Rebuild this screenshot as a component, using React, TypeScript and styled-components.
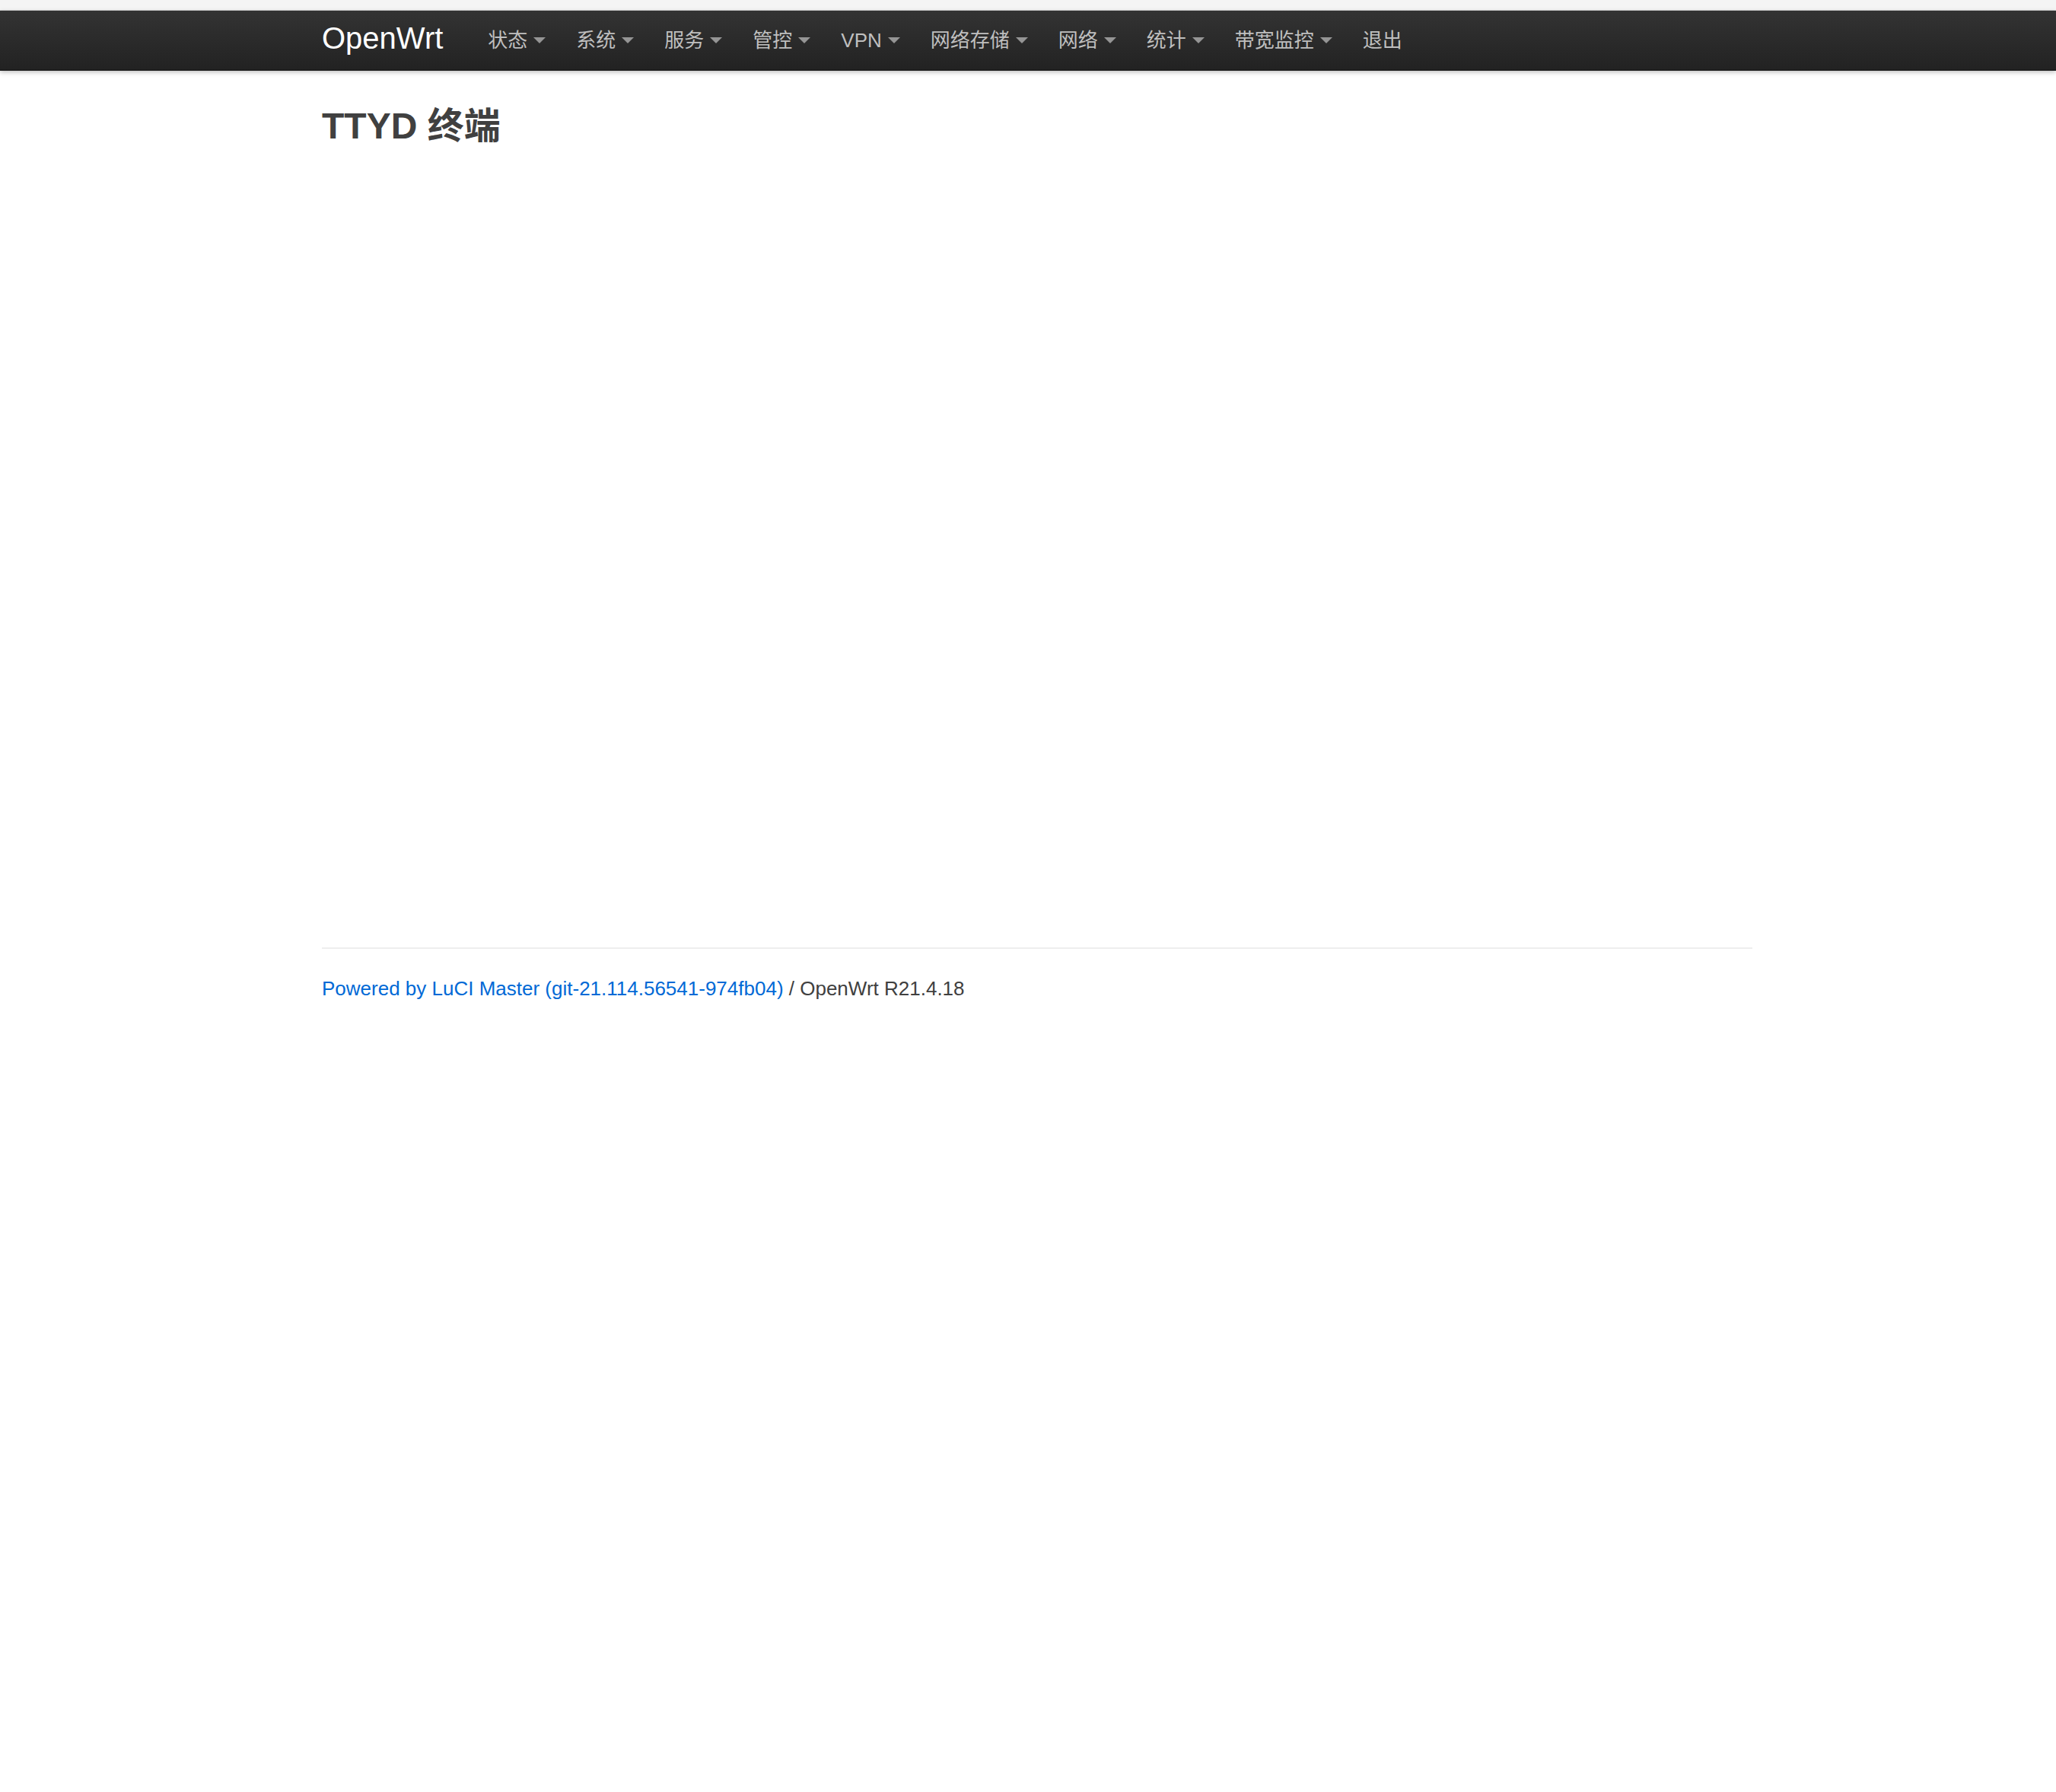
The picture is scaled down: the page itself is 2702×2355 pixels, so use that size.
import React from 'react'
import styled, { createGlobalStyle } from 'styled-components'

const GlobalStyle = createGlobalStyle`
  html, body {
    margin: 0;
    padding: 0;
    background: #fff;
  }
  body {
    font-family: 'Liberation Sans', 'Noto Sans CJK SC', sans-serif;
    font-size: 26px;
    line-height: 36px;
    color: #404040;
  }
  * {
    box-sizing: border-box;
  }
`

type MenuEntry = {
  label: string
  dropdown: boolean
}

const menu: MenuEntry[] = [
  { label: '状态', dropdown: true },
  { label: '系统', dropdown: true },
  { label: '服务', dropdown: true },
  { label: '管控', dropdown: true },
  { label: 'VPN', dropdown: true },
  { label: '网络存储', dropdown: true },
  { label: '网络', dropdown: true },
  { label: '统计', dropdown: true },
  { label: '带宽监控', dropdown: true },
  { label: '退出', dropdown: false },
]

const App = () => {
  return (
    <>
      <GlobalStyle />
      <TopStrip />
      <Header>
        <Container>
          <Brand href="#">OpenWrt</Brand>
          <Menu>
            {menu.map((item) => (
              <MenuItem key={item.label}>
                <MenuLink href="#">
                  {item.label}
                  {item.dropdown && (
                    <>
                      {' '}
                      <Caret />
                    </>
                  )}
                </MenuLink>
              </MenuItem>
            ))}
          </Menu>
        </Container>
      </Header>
      <Main>
        <Container as="div">
          <Title>TTYD 终端</Title>
          <Terminal />
          <Footer>
            <FooterLink href="#">
              Powered by LuCI Master (git-21.114.56541-974fb04)
            </FooterLink>{' '}
            / OpenWrt R21.4.18
          </Footer>
        </Container>
      </Main>
    </>
  )
}

const TopStrip = styled.div`
  height: 14px;
  background: #f4f4f4;
  border-bottom: 1px solid #d8d8d8;
`

const Header = styled.header`
  height: 79px;
  background: linear-gradient(to bottom, #333333, #222222);
  box-shadow: 0 2px 6px rgba(0, 0, 0, 0.25), inset 0 -2px 0 rgba(0, 0, 0, 0.1);
  position: relative;
  z-index: 1;
`

const Container = styled.div`
  width: 1880px;
  margin-left: 423px;
  display: flex;
  align-items: flex-start;
`

const Brand = styled.a`
  display: block;
  margin-left: -20px;
  padding: 16px 20px 24px;
  font-size: 40px;
  line-height: 1;
  color: #ffffff;
  text-decoration: none;
`

const Menu = styled.ul`
  display: flex;
  list-style: none;
  margin: 0 0 0 19px;
  padding: 0;
`

const MenuItem = styled.li`
  display: block;
`

const MenuLink = styled.a`
  display: block;
  padding: 20px 20px 21px;
  font-size: 26px;
  line-height: 38px;
  color: #bfbfbf;
  text-decoration: none;
  white-space: nowrap;
`

const Caret = styled.span`
  display: inline-block;
  width: 0;
  height: 0;
  margin-left: 0.75px;
  border-top: 8px solid rgba(255, 255, 255, 0.5);
  border-left: 8px solid transparent;
  border-right: 8px solid transparent;
  vertical-align: 5px;
`

const Main = styled.main`
  padding-top: 37px;
  & > div {
    display: block;
  }
`

const Title = styled.h2`
  margin: 0;
  font-size: 48px;
  line-height: 72px;
  font-weight: bold;
  color: #404040;
`

const Terminal = styled.div`
  height: 1009px;
`

const Footer = styled.footer`
  margin-top: 34px;
  padding-top: 34px;
  border-top: 2px solid #eeeeee;
  font-size: 26px;
  line-height: 36px;
  color: #404040;
`

const FooterLink = styled.a`
  color: #0069d6;
  text-decoration: none;
`

export default App
